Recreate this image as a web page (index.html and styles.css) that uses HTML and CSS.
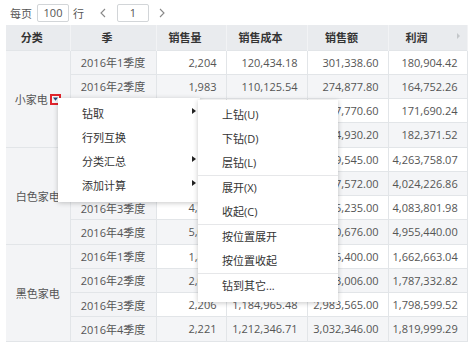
FILE: index.html
```html
<!DOCTYPE html>
<html lang="zh-CN">

<head>
    <meta charset="UTF-8">
    <meta name="viewport" content="width=device-width, initial-scale=1.0">
    <title>销售数据透视表</title>
    <link rel="stylesheet" href="styles.css">
</head>

<body>
    <div class="pager">
        <span>每页</span>
        <span class="pager-box page-size">100</span>
        <span>行</span>
        <svg class="pager-arrow prev" width="8" height="10" viewBox="0 0 8 10"><polyline points="6,1 2,5 6,9" fill="none" stroke="#888" stroke-width="1.1"/></svg>
        <span class="pager-box page-no">1</span>
        <svg class="pager-arrow next" width="8" height="10" viewBox="0 0 8 10"><polyline points="2,1 6,5 2,9" fill="none" stroke="#888" stroke-width="1.1"/></svg>
    </div>

    <table class="pivot">
        <colgroup>
            <col style="width: 64px">
            <col style="width: 86px">
            <col style="width: 70px">
            <col style="width: 81px">
            <col style="width: 81px">
            <col style="width: 79px">
        </colgroup>
        <thead>
            <tr>
                <th>分类</th>
                <th>季</th>
                <th>销售量</th>
                <th>销售成本</th>
                <th>销售额</th>
                <th class="last-col">利润<span class="scroll-arrow"></span></th>
            </tr>
        </thead>
        <tbody>
            <tr>
                <td class="group" rowspan="4">小家电<svg class="drop-icon" width="11" height="11" viewBox="0 0 11 11"><rect x="1" y="1" width="9" height="9" fill="#f4f6f8" stroke="#e0242c" stroke-width="2"/><path d="M3 3.6h5l-2.5 3.1z" fill="#264a78"/></svg></td>
                <td class="season">2016年1季度</td>
                <td>2,204</td><td>120,434.18</td><td>301,338.60</td><td>180,904.42</td>
            </tr>
            <tr>
                <td class="season">2016年2季度</td>
                <td>1,983</td><td>110,125.54</td><td>274,877.80</td><td>164,752.26</td>
            </tr>
            <tr>
                <td class="season">2016年3季度</td>
                <td>2,095</td><td>116,080.36</td><td>287,770.60</td><td>171,690.24</td>
            </tr>
            <tr>
                <td class="season">2016年4季度</td>
                <td>2,230</td><td>122,558.68</td><td>304,930.20</td><td>182,371.52</td>
            </tr>
            <tr>
                <td class="group" rowspan="4">白色家电</td>
                <td class="season">2016年1季度</td>
                <td>4,381</td><td>2,445,786.93</td><td>6,709,545.00</td><td>4,263,758.07</td>
            </tr>
            <tr>
                <td class="season">2016年2季度</td>
                <td>4,139</td><td>2,313,345.14</td><td>6,337,572.00</td><td>4,024,226.86</td>
            </tr>
            <tr>
                <td class="season">2016年3季度</td>
                <td>4,197</td><td>2,351,433.02</td><td>6,435,235.00</td><td>4,083,801.98</td>
            </tr>
            <tr>
                <td class="season">2016年4季度</td>
                <td>5,084</td><td>2,855,236.00</td><td>7,810,676.00</td><td>4,955,440.00</td>
            </tr>
            <tr>
                <td class="group" rowspan="4">黑色家电</td>
                <td class="season">2016年1季度</td>
                <td>1,867</td><td>1,093,736.96</td><td>2,756,400.00</td><td>1,662,663.04</td>
            </tr>
            <tr>
                <td class="season">2016年2季度</td>
                <td>2,009</td><td>1,175,673.18</td><td>2,963,006.00</td><td>1,787,332.82</td>
            </tr>
            <tr>
                <td class="season">2016年3季度</td>
                <td>2,206</td><td>1,184,965.48</td><td>2,983,565.00</td><td>1,798,599.52</td>
            </tr>
            <tr>
                <td class="season">2016年4季度</td>
                <td>2,221</td><td>1,212,346.71</td><td>3,032,346.00</td><td>1,819,999.29</td>
            </tr>
        </tbody>
    </table>

    <ul class="menu main-menu">
        <li class="has-sub">钻取</li>
        <li>行列互换</li>
        <li class="has-sub">分类汇总</li>
        <li class="has-sub">添加计算</li>
    </ul>

    <ul class="menu sub-menu">
        <li>上钻(U)</li>
        <li>下钻(D)</li>
        <li>层钻(L)</li>
        <li class="divider"></li>
        <li>展开(X)</li>
        <li>收起(C)</li>
        <li class="divider"></li>
        <li>按位置展开</li>
        <li>按位置收起</li>
        <li class="divider"></li>
        <li>钻到其它...</li>
    </ul>
</body>

</html>
```

FILE: styles.css
```css
:root {
    --text-color: #555555;
    --head-color: #333333;
    --head-bg: #e9ebee;
    --side-bg: #f3f4f6;
    --stripe-bg: #f4f5f7;
    --line-color: #e2e5e8;
}

* {
    margin: 0;
    padding: 0;
    box-sizing: border-box;
}

body {
    font-family: 'Open Sans', 'Noto Sans CJK SC', sans-serif;
    font-size: 11px;
    color: var(--text-color);
    background-color: #ffffff;
    position: relative;
    width: 474px;
    height: 350px;
    overflow: hidden;
}

.pager {
    display: flex;
    align-items: center;
    height: 25px;
    padding-left: 10px;
    color: #555555;
    font-size: 11px;
}

.pager-box {
    display: inline-flex;
    align-items: center;
    justify-content: center;
    height: 18px;
    border: 1px solid #d2d5d8;
    border-radius: 2px;
    color: #555555;
}

.page-size {
    width: 32px;
    margin: 0 4px 0 5px;
}

.page-no {
    width: 32px;
}

.pager-arrow.prev {
    margin: 0 10px 0 15px;
}

.pager-arrow.next {
    margin-left: 9px;
}

.pivot {
    margin-left: 6px;
    width: 461px;
    table-layout: fixed;
    border-collapse: collapse;
}

.pivot th {
    height: 25px;
    background-color: var(--head-bg);
    color: var(--head-color);
    font-weight: 700;
    text-align: center;
    padding-right: 12px;
    border-right: 1px solid #f2f3f5;
}

.pivot th.last-col {
    position: relative;
    padding-right: 22px;
}

.scroll-arrow {
    position: absolute;
    right: 7px;
    top: 8px;
    width: 0;
    height: 0;
    border-left: 3px solid #c4c7ca;
    border-top: 3px solid transparent;
    border-bottom: 3px solid transparent;
}

.pivot td {
    height: 24.25px;
    padding: 0 9px 0 4px;
    text-align: right;
    white-space: nowrap;
    border: 1px solid var(--line-color);
    background-color: #ffffff;
}

.pivot tbody tr:nth-child(even) td {
    background-color: var(--stripe-bg);
}

.pivot td.group,
.pivot td.season,
.pivot tbody tr:nth-child(even) td.group,
.pivot tbody tr:nth-child(even) td.season {
    background-color: var(--side-bg);
    text-align: center;
    padding: 0;
}

.pivot td.group {
    border-left: none;
}

.drop-icon {
    vertical-align: -1px;
    margin-left: 2px;
}

.menu {
    position: absolute;
    list-style: none;
    background-color: #ffffff;
    box-shadow: 0 1px 5px rgba(0, 0, 0, 0.22);
    color: #333333;
    font-size: 11px;
}

.menu li {
    position: relative;
    height: 24px;
    line-height: 24px;
    padding-left: 24px;
}

.main-menu {
    left: 58px;
    top: 98px;
    width: 142px;
    padding: 4px 0 4px;
}

.main-menu li.has-sub::after {
    content: '';
    position: absolute;
    right: 4px;
    top: 6px;
    width: 0;
    height: 0;
    border-left: 4px solid #222222;
    border-top: 3px solid transparent;
    border-bottom: 3px solid transparent;
}

.sub-menu {
    left: 198px;
    top: 100px;
    width: 140px;
    padding: 3px 0 4px;
}

.sub-menu li.divider {
    height: 1px;
    padding: 0;
    margin: 0;
    background-color: #e6e7e9;
}
```
